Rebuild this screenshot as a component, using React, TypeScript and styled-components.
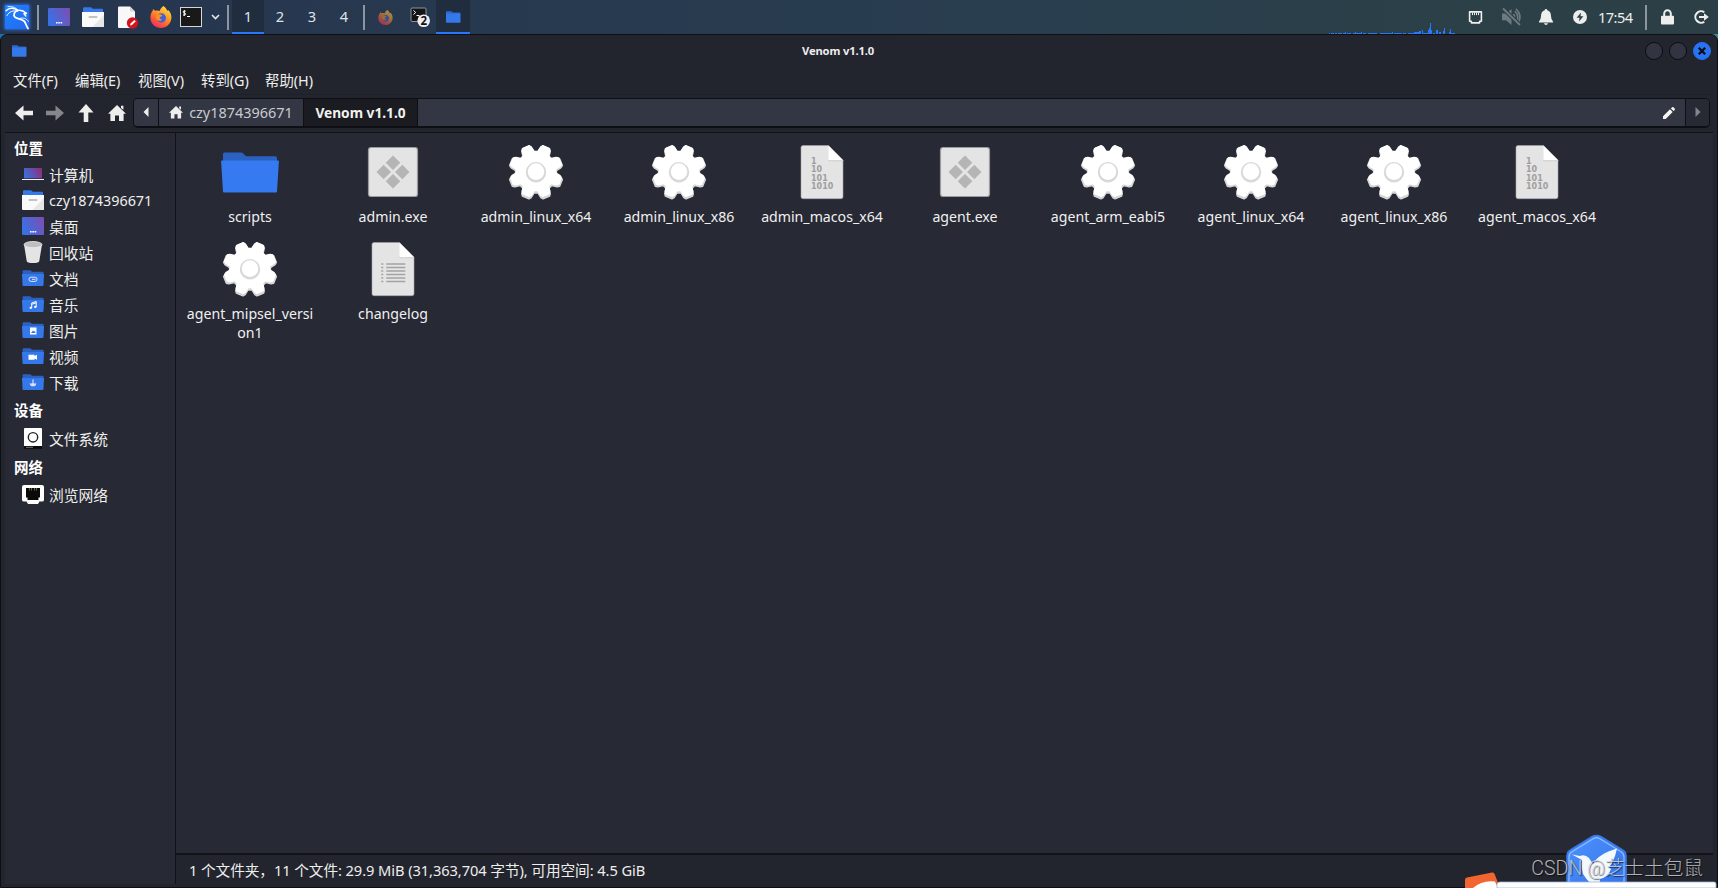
import React from "react";
import styled, { createGlobalStyle } from "styled-components";

const GlobalStyle = createGlobalStyle`
  * { box-sizing: border-box; }
  body { margin: 0; overflow: hidden; background: #101116; }
  svg { display: block; flex: none; overflow: visible; }
`;

const Desktop = styled.div`
  position: relative;
  width: 1718px;
  height: 888px;
  display: flex;
  flex-direction: column;
  overflow: hidden;
  color: #eeeeec;
  font-family: "Noto Sans", "Noto Sans CJK SC", sans-serif;
  font-size: 14px;
  background: linear-gradient(90deg, #1f6ea8 0%, #2a5f6c 50%, #3f8a8a 100%);
`;

/* ---------- top panel ---------- */

const Panel = styled.header`
  height: 34px;
  flex: none;
  display: flex;
  align-items: stretch;
  background: linear-gradient(90deg, #26354f 0%, #27394f 30%, #293e4f 60%, #2c4048 85%, #2c3f46 100%);
`;

const Slot = styled.div<{ $w: number }>`
  width: ${(p) => p.$w}px;
  flex: none;
  display: flex;
  align-items: center;
  justify-content: center;
`;

const Divider = styled.i`
  width: 2px;
  height: 25px;
  background: #8d959f;
`;

const Workspace = styled.div<{ $active?: boolean }>`
  width: 32px;
  height: 34px;
  padding-bottom: 2px;
  display: flex;
  align-items: center;
  justify-content: center;
  font-size: 14.67px;
  color: #dfe3e8;
  background: ${(p) => (p.$active ? "#202d3f" : "transparent")};
  box-shadow: ${(p) => (p.$active ? "inset 0 -2px 0 #2777ff" : "none")};
`;

const Task = styled(Slot)<{ $active?: boolean }>`
  background: ${(p) => (p.$active ? "#202d3f" : "transparent")};
  box-shadow: ${(p) => (p.$active ? "inset 0 -2px 0 #2777ff" : "none")};
`;

const Tray = styled.div`
  display: flex;
  margin-left: auto;
`;

const Clock = styled.time`
  width: 36px;
  display: flex;
  align-items: center;
  font-size: 14.6px;
  letter-spacing: -0.55px;
  padding-bottom: 1px;
`;

const CpuGraph = styled.svg`
  align-self: flex-end;
  margin-right: 3px;
`;

/* ---------- window ---------- */

const Window = styled.main`
  flex: 1;
  min-height: 0;
  display: flex;
  flex-direction: column;
  border: 1px solid #0e0f13;
  border-radius: 7px 7px 0 0;
  background: #23252e;
  padding: 0 4px 3px 4px;
`;

const TitleBar = styled.div`
  height: 31px;
  flex: none;
  display: grid;
  grid-template-columns: 90px 1fr 90px;
  align-items: center;
  padding: 0 2px 0 7px;
`;

const Title = styled.h1`
  margin: 0;
  font-size: 11.2px;
  letter-spacing: -0.15px;
  font-weight: 700;
  text-align: center;
  padding-right: 47px;
`;

const Controls = styled.div`
  display: flex;
  justify-content: flex-end;
  gap: 6px;
`;

const Control = styled.span<{ $close?: boolean }>`
  width: 18px;
  height: 18px;
  border-radius: 50%;
  display: flex;
  align-items: center;
  justify-content: center;
  border: 1px solid ${(p) => (p.$close ? "#2a72f0" : "#0c0d11")};
  background: ${(p) => (p.$close ? "#2673f5" : "#323541")};
`;

const MenuBar = styled.nav`
  height: 28px;
  flex: none;
  display: flex;
  align-items: center;
  gap: 16px;
  padding: 0 0 2px 8px;
  font-size: 14.4px;
`;

const MenuItem = styled.span<{ $w: number }>`
  width: ${(p) => p.$w}px;
  white-space: nowrap;
`;

const Toolbar = styled.div`
  height: 39px;
  flex: none;
  display: flex;
  align-items: center;
  padding: 0 3px 0 3px;
  border-bottom: 1px solid #111216;
  box-shadow: inset 0 1px 0 #1f2128;
`;

const PathBar = styled.div`
  flex: 1;
  height: 30px;
  display: flex;
  border: 1px solid #0e0f14;
  border-bottom-width: 2px;
  border-radius: 5px;
  background: #333643;
  overflow: hidden;
`;

const PathButton = styled.div<{ $w: number; $current?: boolean; $muted?: boolean }>`
  width: ${(p) => p.$w}px;
  flex: none;
  display: flex;
  align-items: center;
  justify-content: center;
  gap: 6px;
  border-right: 1px solid #0e0f14;
  white-space: nowrap;
  font-size: ${(p) => (p.$current ? 13.7 : 14.45)}px;
  padding-bottom: 1px;
  font-weight: ${(p) => (p.$current ? 700 : 400)};
  color: ${(p) => (p.$current ? "#f2f2f0" : "#c9cbd0")};
  background: ${(p) => (p.$current ? "#1b1c22" : p.$muted ? "#272934" : "#333643")};
  &:last-child { border-right: 0; }
`;

const PathField = styled.div`
  flex: 1;
  display: flex;
  align-items: center;
  justify-content: flex-end;
  padding-right: 10px;
  border-right: 1px solid #0e0f14;
`;

const Body = styled.div`
  flex: 1;
  min-height: 0;
  display: flex;
`;

const Sidebar = styled.aside`
  width: 171px;
  flex: none;
  background: #272934;
  border-right: 1px solid #111216;
`;

const Heading = styled.h2<{ $h?: number }>`
  margin: 0;
  height: ${(p) => p.$h ?? 28}px;
  padding-left: 9px;
  display: flex;
  align-items: center;
  font-size: 14.5px;
  font-weight: 700;
  color: #fff;
`;

const Place = styled.div<{ $h?: number }>`
  height: ${(p) => p.$h ?? 26}px;
  display: flex;
  align-items: center;
  gap: 5px;
  padding-left: 17px;
`;

const PlaceName = styled.span<{ $latin?: boolean }>`
  font-size: ${(p) => (p.$latin ? 14.4 : 14.75)}px;
`;

const Main = styled.section`
  flex: 1;
  display: flex;
  flex-direction: column;
  background: #272934;
`;

const Files = styled.div`
  flex: 1;
  display: grid;
  grid-template-columns: repeat(10, 143px);
  grid-auto-rows: 97px;
  padding: 10px 0 0 2.5px;
`;

const File = styled.figure`
  margin: 0;
  display: flex;
  flex-direction: column;
  align-items: center;
`;

const FileName = styled.figcaption`
  width: 132px;
  margin-top: 6px;
  line-height: 19px;
  font-size: 14.15px;
  text-align: center;
  word-break: break-all;
  color: #f0f0f0;
`;

const StatusBar = styled.footer`
  height: 31px;
  flex: none;
  display: flex;
  align-items: center;
  padding-left: 13px;
  font-size: 14.67px;
  white-space: pre;
  background: #23252e;
  border-top: 2px solid #131418;
`;

const StatusText = styled.span`
  letter-spacing: -0.08px;
`;

/* ---------- overlays ---------- */

const Popup = styled.div`
  position: absolute;
  left: 1462px;
  bottom: 0;
`;

const Watermark = styled.div`
  position: absolute;
  right: 15px;
  bottom: 6px;
  font-family: Roboto, "Noto Sans CJK SC", sans-serif;
  font-weight: 300;
  font-size: 19.6px;
  line-height: 26px;
  white-space: nowrap;
  color: rgba(214, 214, 216, 0.82);
  text-shadow: 1px 1px 1px rgba(0, 0, 0, 0.6);
`;

/* ---------- icons ---------- */

const KaliLogo = () => (
  <svg width="26" height="26" viewBox="0 0 26 26">
    <defs>
      <filter id="glow" x="-30%" y="-30%" width="160%" height="160%">
        <feGaussianBlur stdDeviation="1.8" />
      </filter>
      <linearGradient id="kali" x1="0" y1="0" x2="1" y2="1">
        <stop offset="0" stopColor="#1d84ff" />
        <stop offset="1" stopColor="#2567ef" />
      </linearGradient>
    </defs>
    <rect x="0" y="0" width="26" height="26" rx="2" fill="#2b7cff" opacity=".75" filter="url(#glow)" />
    <rect x="1" y="1" width="24" height="24" rx="1" fill="url(#kali)" />
    <g fill="none" stroke="#fff" strokeLinecap="round" strokeLinejoin="round">
      <path d="M2 6.800C5 3.600 9.500 3.600 14 6.300" strokeWidth="1.500" />
      <path d="M3 11.500C5 7.500 9 6.300 13.500 7" strokeWidth="1" />
      <path d="M4 2.600C8 2.200 11.500 3.600 13.500 5.600" strokeWidth=".9" />
      <path d="M13.500 6.500C10 8 9 11 11 13.200C13 15.300 18 14.300 20.400 17.400C22 19.600 22.200 22 24 24.500" strokeWidth="1.800" />
      <path d="M13.500 6.600C16.500 5.600 19.200 6.600 22.400 9.400L20 9.800L21.800 12" strokeWidth="1.500" />
      <path d="M15.500 14.500C19.500 13.200 22.500 14.400 24.400 17.400" strokeWidth=".9" />
    </g>
  </svg>
);

const DesktopIcon = ({ id }: { id: string }) => (
  <svg width="22" height="18" viewBox="0 0 22 18">
    <defs>
      <linearGradient id={id} x1="0" y1=".6" x2="1" y2=".2">
        <stop offset="0" stopColor="#3871e6" />
        <stop offset="1" stopColor="#7a4fb4" />
      </linearGradient>
    </defs>
    <rect width="22" height="18" rx="1" fill={`url(#${id})`} />
    <path d="M8 14h1.600v1.400H8zM10.300 14h1.600v1.400h-1.600zM12.600 14h1.600v1.400h-1.600z" fill="#fff" />
  </svg>
);

const HomeFolder = () => (
  <svg width="22" height="20" viewBox="0 0 22 20">
    <path d="M1 1.200Q1 .2 2 .2h7l1.800 1.600H20q1 0 1 1V8H1z" fill="#3578ea" />
    <path d="M0 5h22v14q0 1-1 1H1q-1 0-1-1z" fill="#fafafa" />
    <path d="M22 8v11q0 1-1 1H10.500z" fill="#e6e6e6" />
    <rect x="6.500" y="9" width="9" height="2" rx="1" fill="#c3c3c3" />
  </svg>
);

const EditorIcon = () => (
  <svg width="20" height="23" viewBox="0 0 20 23">
    <path d="M0 1.500Q0 .5 1 .5h11l5 5V21q0 1-1 1H1q-1 0-1-1z" fill="#f8f8f8" />
    <path d="M12 .5l5 5h-4q-1 0-1-1z" fill="#d4d4d4" />
    <circle cx="14.500" cy="17" r="5.700" fill="#d4141c" />
    <path d="M12 19.500l.6-2 3.800-3.600 1.400 1.300-3.800 3.700z" fill="#fff" />
  </svg>
);

const Firefox = ({ id, size, dim }: { id: string; size: number; dim?: boolean }) => (
  <svg width={size} height={size} viewBox="0 0 22 22" opacity={dim ? 0.58 : 1}>
    <defs>
      <linearGradient id={id} x1=".8" y1="0" x2=".2" y2="1">
        <stop offset="0" stopColor="#ffe14a" />
        <stop offset=".4" stopColor="#ff9a26" />
        <stop offset=".75" stopColor="#ff4f3c" />
        <stop offset="1" stopColor="#e8296c" />
      </linearGradient>
    </defs>
    <path
      d="M13.500 0C16 1.500 16.400 3.400 17.500 4.700L18.600 4.200C20.800 7 21.700 9.300 21.400 12.300C20.800 18 16.400 22 11 22C5 22 .4 17.500 .4 11.800C.4 9 1.200 6.600 2.800 4.600L3 2.900L5.200 4.800C7 4.200 8.300 4.300 9.600 5C10.400 3 11.600 1 13.500 0z"
      fill={`url(#${id})`}
    />
    <circle cx="11.300" cy="12" r="4.700" fill="#3f62d8" />
    <path d="M6.300 12.500C5.500 9.700 7.600 7.700 10.400 8.300L12.600 9.800L9.800 11.200C9.400 12.600 10.600 13.600 12.200 13.400C10.800 15.500 7.300 15.300 6.300 12.500z" fill="#ff9123" />
  </svg>
);

const Terminal = () => (
  <svg width="22" height="20" viewBox="0 0 22 20">
    <rect x=".5" y=".5" width="21" height="19" fill="#191919" stroke="#d6d6d6" />
    <path d="M5.600 4.200H4q-1 .2-.8 1t1.200.8q1.200.1 1.200 1T4.500 8H3M4.300 3v6M7 9.500h3" fill="none" stroke="#fff" strokeWidth="1" />
  </svg>
);

const TerminalTask = () => (
  <svg width="20" height="20" viewBox="0 0 20 20">
    <rect x="2" y="1" width="15" height="13.500" rx="1" fill="#141517" stroke="#8f9499" />
    <path d="M4.500 3.500l2.200 2-2.200 2M7.500 8.500h3" fill="none" stroke="#fff" />
    <circle cx="14.700" cy="13.700" r="6.300" fill="#efefef" />
    <text x="14.700" y="17.800" textAnchor="middle" fontSize="11.500" fontWeight="700" fill="#111" fontFamily="Noto Sans, sans-serif">2</text>
  </svg>
);

const MiniFolder = () => (
  <svg width="15" height="12" viewBox="0 0 15 12">
    <path d="M0 1Q0 .5.500.5h5l1.200 1.200h7Q14.500 1.700 14.500 2.500V11q0 .7-.7.7H.7Q0 11.700 0 11z" fill="#3578ea" />
    <path d="M0 1Q0 .5.500.5h5l1.200 1.200h7Q14.400 1.700 14.400 2.500H0z" fill="#2c66cc" />
  </svg>
);

const Chevron = () => (
  <svg width="9" height="6" viewBox="0 0 9 6">
    <path d="M1 1l3.500 3.500L8 1" fill="none" stroke="#e8e8e8" strokeWidth="1.600" />
  </svg>
);

const EthernetTray = () => (
  <svg width="15" height="13" viewBox="0 0 15 13">
    <path d="M1.600.9h11.800v9.400H11.600v1.600H3.400v-1.600H1.600z" fill="none" stroke="#eeeeec" strokeWidth="1.600" strokeLinejoin="round" />
    <path d="M4.500 1.500v2.600M6.500 1.500v2.600M8.500 1.500v2.600M10.500 1.500v2.600" stroke="#eeeeec" />
  </svg>
);

const MutedTray = () => (
  <svg width="19" height="18" viewBox="0 0 19 18" opacity=".95">
    <g fill="none" stroke="#737e84">
      <path d="M0 5.500h4L9.500 1v16L4 12.300H0z" fill="#737e84" stroke="none" />
      <path d="M11.500 6q2 3 0 6M13 3q5 5.500 1 12M14 .8q6 6 3 13" strokeWidth="1.600" />
      <path d="M1 .5L18 17" stroke="#2c4048" strokeWidth="4" />
      <path d="M1 .5L18 17" strokeWidth="1.800" />
    </g>
  </svg>
);

const BellTray = () => (
  <svg width="14" height="16" viewBox="0 0 14 16">
    <path d="M7 0q1.200 0 1.300 1.200Q12 2.200 12 7q0 3.500 2 5.400V13.500H0v-1.100Q2 10.500 2 7 2 2.200 5.700 1.200 5.800 0 7 0zM5 14.300h4Q8.600 16 7 16T5 14.300z" fill="#eeeeec" />
  </svg>
);

const PowerTray = () => (
  <svg width="14" height="14" viewBox="0 0 14 14">
    <circle cx="7" cy="7" r="7" fill="#eeeeec" />
    <path d="M8 2.400L3.600 7.700H6.500L6 11.600l4.400-5.300H7.500z" fill="#2c4048" />
  </svg>
);

const LockTray = () => (
  <svg width="13" height="16" viewBox="0 0 13 16">
    <path d="M3.200 8V4.500a3.300 3.300 0 0 1 6.600 0V8" fill="none" stroke="#eeeeec" strokeWidth="2" />
    <rect y="6.800" width="13" height="8.700" rx="1" fill="#eeeeec" />
  </svg>
);

const LogoutTray = () => (
  <svg width="15" height="14" viewBox="0 0 15 14">
    <path d="M10.300 2.300A5.700 5.700 0 1 0 10.300 11.700" fill="none" stroke="#eeeeec" strokeWidth="2" />
    <path d="M5 6h5V3.300L14.800 7 10 10.700V8H5z" fill="#eeeeec" />
  </svg>
);

const graphBars: [number, number, number][] = [
  [0, 1, 1], [2, 3, 1], [6, 2, 1], [9, 4, 1], [14, 2, 1], [16, 1, 2], [18, 4, 1], [24, 8, 1], [26, 1, 2],
  [32, 1, 2], [34, 3, 1], [39, 9, 1], [51, 12, 1], [63, 1, 2], [65, 8, 1], [74, 3, 1], [79, 6, 1], [85, 4, 2],
  [89, 3, 2], [90, 2, 3], [93, 1, 4], [94, 5, 1], [99, 2, 4], [100, 2, 6], [101, 1, 11], [102, 1, 4], [104, 2, 1],
  [107, 2, 4], [110, 2, 2], [114, 2, 3], [115, 1, 6], [120, 2, 2], [121, 1, 5], [122, 4, 1],
];

const BackArrow = ({ flip, muted }: { flip?: boolean; muted?: boolean }) => (
  <svg width="18" height="16" viewBox="0 0 18 16">
    <path
      transform={flip ? "translate(18 0) scale(-1 1)" : undefined}
      d="M0 8L8.500.5V5.700H18v4.600H8.500v5.200z"
      fill={muted ? "#86878b" : "#eeeeec"}
    />
  </svg>
);

const UpArrow = () => (
  <svg width="16" height="18" viewBox="0 0 16 18">
    <path d="M8 0L15.500 8.500H10.300V18H5.700V8.500H.5z" fill="#eeeeec" />
  </svg>
);

const HomeGlyph = ({ w }: { w: number }) => (
  <svg width={w} height={(w * 16) / 18} viewBox="0 0 18 16">
    <path d="M9 0L18 8.700H15.600V16H11V10.500H7V16H2.400V8.700H0zM13 .8h2.400v4L13 3z" fill="#eeeeec" />
  </svg>
);

const Triangle = ({ right }: { right?: boolean }) => (
  <svg width="6" height="10" viewBox="0 0 6 10">
    <path d={right ? "M.5 0L5.500 5L.5 10z" : "M5.500 0L.5 5L5.500 10z"} fill={right ? "#85868c" : "#eeeeec"} />
  </svg>
);

const Pencil = () => (
  <svg width="12" height="12" viewBox="0 0 12 12">
    <path d="M0 9.300L7 2.300 9.700 5 2.700 12H0zM7.900 1.400L9.100.3q.7-.6 1.300 0l1.300 1.300q.6.7 0 1.300L10.600 4.100z" fill="#f4f4f2" />
  </svg>
);

const LaptopIcon = () => (
  <svg width="22" height="12" viewBox="0 0 22 12">
    <defs>
      <linearGradient id="laptop" x1="0" y1=".6" x2="1" y2=".3">
        <stop offset="0" stopColor="#3a6fdc" />
        <stop offset="1" stopColor="#8c2f7c" />
      </linearGradient>
    </defs>
    <rect x="2" width="18" height="10.300" fill="url(#laptop)" />
    <rect y="11" width="22" height="1" fill="#f2f2f2" />
  </svg>
);

const TrashIcon = () => (
  <svg width="22" height="22" viewBox="0 0 22 22">
    <path d="M2 3.500L4.700 20Q5 22 11 22t6.300-2L20 3.500z" fill="#e4e4e4" />
    <ellipse cx="11" cy="3.600" rx="9" ry="3.100" fill="#bfbfbf" stroke="#ededed" strokeWidth=".8" />
  </svg>
);

const glyphs: Record<string, React.ReactNode> = {
  docs: (
    <g fill="none" stroke="#dbe7ff" strokeWidth="1">
      <rect x="7" y="7.200" width="8" height="4.200" rx="2.100" />
      <path d="M13.500 9.300h-3.500" />
    </g>
  ),
  music: <path d="M9.700 11.800V7l4.500-1.500v5.300M9.700 8.300l4.500-1.500" fill="none" stroke="#fff" strokeWidth="1" />,
  pics: <><rect x="8" y="5.500" width="6.500" height="7" fill="#fff" /><path d="M9 11l2-2.500 1 1 .7-.5 1 2z" fill="#3578ea" /></>,
  video: <path d="M6.500 6.800h6v1.300l2.500-1.300v5l-2.500-1.300v1.300h-6z" fill="#fff" />,
  down: <path d="M11 5.500v5.500M8.200 9.300q.5 2.500 2.800 2.500t2.800-2.500M9.500 9.500L11 11l1.500-1.500" fill="none" stroke="#dbe7ff" strokeWidth="1.100" />,
};

const PlaceFolder = ({ kind }: { kind: string }) => (
  <svg width="22" height="16" viewBox="0 0 22 16">
    <path d="M.6 1Q.6.2 1.500.2h6.800l1.700 1.500h10.600q1 0 1 1V8H.6z" fill="#2b62c2" />
    <path d="M0 4h22l-.5 11q0 1-1 1h-19q-1 0-1-1z" fill="#3478ea" />
    {kind === "music" && <path d="M7.500 11.800a1.300 1.100 0 1 0 2.600 0a1.300 1.100 0 1 0-2.600 0M12 10.900a1.300 1.100 0 1 0 2.600 0a1.300 1.100 0 1 0-2.600 0" fill="#fff" />}
    {glyphs[kind]}
  </svg>
);

const DiskIcon = () => (
  <svg width="22" height="21" viewBox="0 0 22 21">
    <path d="M3 0h16q1 0 1 1v17H2V1q0-1 1-1z" fill="#fff" />
    <rect x="2" y="18" width="18" height="2.800" fill="#0b0b0b" />
    <rect x="4" y="18.800" width="7" height="1" fill="#777" />
    <circle cx="11" cy="9.300" r="4.700" fill="none" stroke="#222" strokeWidth="1.400" />
  </svg>
);

const NetworkIcon = () => (
  <svg width="22" height="19" viewBox="0 0 22 19">
    <path d="M2 0h18q2 0 2 2v13q0 1.500-2 1.500h-2.500L16 19H6l-1.500-2.500H2Q0 16.500 0 15V2Q0 0 2 0z" fill="#fff" />
    <path d="M4 3h14v9.500h-1.500V15H5.500v-2.500H4z" fill="#0a0a0a" />
    <path d="M7.500 3v2.500M9.500 3v2.500M12.500 3v2.500M14.500 3v2.500" stroke="#6d6238" />
  </svg>
);

const FolderIcon = () => (
  <svg width="58" height="58" viewBox="0 0 58 58">
    <path d="M2 11Q2 9.500 3.500 9.500H20q1.500 0 2.500 1.200L25 13.200H54.500Q56 13.200 56 14.800V24H2z" fill="#2b62c2" />
    <path d="M.6 17.500h56.800q.6 0 .5.700L56 48.500q0 1-1.200 1H3.200q-1.200 0-1.200-1L.1 18.200q0-.7.5-.7z" fill="#357af0" />
  </svg>
);

const ExeIcon = () => (
  <svg width="58" height="58" viewBox="0 0 58 58">
    <rect x="4.500" y="4.500" width="49" height="49" rx="2.500" fill="#e4e4e4" stroke="#9c9ca0" strokeWidth="1.200" />
    <path d="M29 12.500l7.300 7.200-7.300 7.200-7.300-7.200zM29 31l7.300 7.200-7.300 7.200-7.300-7.200zM19.700 21.800l7.300 7.200-7.300 7.200-7.200-7.200zM38.300 21.800l7.200 7.200-7.200 7.200-7.300-7.200z" fill="#b5b5b5" />
  </svg>
);

// An eight-toothed cog: each tooth is a 45° wedge with a flat, rounded top.
const gearPoint = (deg: number, r: number) => {
  const a = (deg * Math.PI) / 180;
  return `${(29 + r * Math.cos(a)).toFixed(2)} ${(29 + r * Math.sin(a)).toFixed(2)}`;
};
const gearPath =
  Array.from({ length: 8 }, (_, i) => {
    const c = i * 45 + 22.5;
    return `${i ? "L" : "M"}${gearPoint(c - 17, 20.5)}L${gearPoint(c - 11.5, 25.5)}L${gearPoint(c - 7.5, 27.3)}L${gearPoint(c + 7.5, 27.3)}L${gearPoint(c + 11.5, 25.5)}L${gearPoint(c + 17, 20.5)}`;
  }).join("") + "z";

const GearIcon = () => (
  <svg width="58" height="58" viewBox="0 0 58 58">
    <g strokeLinejoin="round" strokeWidth="1.500">
      <path d={gearPath} transform="translate(0 .5)" fill="#d6d6d6" stroke="#d6d6d6" />
      <path d={gearPath} transform="translate(1.160 .2) scale(.96)" fill="#fff" stroke="#fff" />
    </g>
    <circle cx="29" cy="29.300" r="10.200" fill="#d8d8d8" />
    <circle cx="29" cy="28.600" r="8.300" fill="#fff" />
  </svg>
);

const Page = ({ children }: { children: React.ReactNode }) => (
  <svg width="58" height="58" viewBox="0 0 58 58">
    <path d="M8 4.500Q8 2.500 10 2.500H35.300L50 17.300V53.700Q50 55.700 48 55.700H10Q8 55.700 8 53.700z" fill="#e4e4e4" stroke="#a5a5a8" strokeWidth=".6" />
    <path d="M35.300 17q0 1.200 1.200 1.200H50V17.300L35.300 2.500z" fill="#c9c9c9" />
    <path d="M35.300 2.500L50 17.300H36.500q-1.200 0-1.200-1.200z" fill="#fff" />
    {children}
  </svg>
);

const BinaryIcon = () => (
  <Page>
    <g fill="#9e9e9e" fontFamily="DejaVu Sans, sans-serif" fontWeight="700" fontSize="8">
      <text x="18" y="20.500">1</text>
      <text x="18" y="28.700">10</text>
      <text x="18" y="38.200">101</text>
      <text x="18" y="46.400">1010</text>
    </g>
  </Page>
);

const TextIcon = () => (
  <Page>
    {[24, 27.5, 31, 34.5, 38, 41.5].map((y) => (
      <path key={y} d={`M17.300 ${y}h2M22.300 ${y}h19`} stroke="#a2a2a2" strokeWidth="1.500" />
    ))}
  </Page>
);

const icons = { folder: FolderIcon, exe: ExeIcon, gear: GearIcon, binary: BinaryIcon, text: TextIcon };

const files: { name: string; icon: keyof typeof icons }[] = [
  { name: "scripts", icon: "folder" },
  { name: "admin.exe", icon: "exe" },
  { name: "admin_linux_x64", icon: "gear" },
  { name: "admin_linux_x86", icon: "gear" },
  { name: "admin_macos_x64", icon: "binary" },
  { name: "agent.exe", icon: "exe" },
  { name: "agent_arm_eabi5", icon: "gear" },
  { name: "agent_linux_x64", icon: "gear" },
  { name: "agent_linux_x86", icon: "gear" },
  { name: "agent_macos_x64", icon: "binary" },
  { name: "agent_mipsel_version1", icon: "gear" },
  { name: "changelog", icon: "text" },
];

const places: { name: string; icon: React.ReactNode }[] = [
  { name: "计算机", icon: <LaptopIcon /> },
  { name: "czy1874396671", icon: <HomeFolder /> },
  { name: "桌面", icon: <DesktopIcon id="side-desktop" /> },
  { name: "回收站", icon: <TrashIcon /> },
  { name: "文档", icon: <PlaceFolder kind="docs" /> },
  { name: "音乐", icon: <PlaceFolder kind="music" /> },
  { name: "图片", icon: <PlaceFolder kind="pics" /> },
  { name: "视频", icon: <PlaceFolder kind="video" /> },
  { name: "下载", icon: <PlaceFolder kind="down" /> },
];

const PopupArt = () => (
  <svg width="256" height="54" viewBox="0 0 256 54">
    <defs>
      <linearGradient id="hex" x1="0" y1="0" x2="1" y2="1">
        <stop offset="0" stopColor="#4b93ff" />
        <stop offset="1" stopColor="#3672e6" />
      </linearGradient>
    </defs>
    <path d="M105 54V22q0-4 3.500-6L130 2.800q4.500-2.500 9 0L160.500 16q3.500 2 3.500 6V54z" fill="url(#hex)" stroke="#3a78ea" strokeWidth="1.600" />
    <path d="M107 54V23q0-3.500 3-5.300L131.500 4.600q3-1.800 6 0L159 17.700q3 1.800 3 5.300V54" fill="none" stroke="#8fbcff" strokeWidth="1.200" />
    <path d="M110 20.500L118 22Q123 20 127 24L131 30Q136 20 155 14.500Q152 28 147 33L149 35Q146 43 138 45Q137 48 140 50H129Q124 45 121 40Q119 32 120 26z" fill="#f4f8ff" />
    <path d="M3 54V46q0-2 2-2.400L30 38.500q2-.5 2.600 1.500L38 54z" fill="#f26531" />
    <path d="M11 54Q20 46 33 47.500L36 54z" fill="#fff" />
    <path d="M35 54V50.500Q35 48 38 48H252q2 0 2 2V54z" fill="#fff" stroke="#9db4d8" strokeWidth=".8" />
  </svg>
);

export default function App() {
  return (
    <Desktop>
      <GlobalStyle />
      <Panel>
        <Slot $w={34}><KaliLogo /></Slot>
        <Slot $w={8}><Divider /></Slot>
        <Slot $w={34}><DesktopIcon id="panel-desktop" /></Slot>
        <Slot $w={34}><HomeFolder /></Slot>
        <Slot $w={36}><EditorIcon /></Slot>
        <Slot $w={30}><Firefox id="fox" size={22} /></Slot>
        <Slot $w={30}><Terminal /></Slot>
        <Slot $w={18}><Chevron /></Slot>
        <Slot $w={8}><Divider /></Slot>
        <Workspace $active>1</Workspace>
        <Workspace>2</Workspace>
        <Workspace>3</Workspace>
        <Workspace>4</Workspace>
        <Slot $w={8}><Divider /></Slot>
        <Task $w={34}><Firefox id="fox-dim" size={15} dim /></Task>
        <Task $w={34}><TerminalTask /></Task>
        <Task $w={34} $active><MiniFolder /></Task>
        <Tray>
          <CpuGraph width="126" height="12" viewBox="0 0 126 12">
            {graphBars.map(([x, w, h], i) => (
              <rect key={i} x={x} y={12 - h} width={w} height={h} fill="#2777ff" />
            ))}
          </CpuGraph>
          <Slot $w={35}><EthernetTray /></Slot>
          <Slot $w={37}><MutedTray /></Slot>
          <Slot $w={32}><BellTray /></Slot>
          <Slot $w={36}><PowerTray /></Slot>
          <Clock>17:54</Clock>
          <Slot $w={24}><Divider /></Slot>
          <Slot $w={18}><LockTray /></Slot>
          <Slot $w={9} />
          <Slot $w={33}><LogoutTray /></Slot>
        </Tray>
      </Panel>

      <Window>
        <TitleBar>
          <MiniFolder />
          <Title>Venom v1.1.0</Title>
          <Controls>
            <Control />
            <Control />
            <Control $close>
              <svg width="8" height="8" viewBox="0 0 8 8">
                <path d="M.8.8l6.400 6.400M7.200.8L.8 7.200" stroke="#0d0e12" strokeWidth="2.300" />
              </svg>
            </Control>
          </Controls>
        </TitleBar>

        <MenuBar>
          <MenuItem $w={46}>文件(F)</MenuItem>
          <MenuItem $w={47}>编辑(E)</MenuItem>
          <MenuItem $w={47}>视图(V)</MenuItem>
          <MenuItem $w={48}>转到(G)</MenuItem>
          <MenuItem $w={50}>帮助(H)</MenuItem>
        </MenuBar>

        <Toolbar>
          <Slot $w={32}><BackArrow /></Slot>
          <Slot $w={30}><BackArrow flip muted /></Slot>
          <Slot $w={31}><UpArrow /></Slot>
          <Slot $w={32}><HomeGlyph w={18} /></Slot>
          <PathBar>
            <PathButton $w={25}><Triangle /></PathButton>
            <PathButton $w={145}><HomeGlyph w={14} />czy1874396671</PathButton>
            <PathButton $w={114} $current>Venom v1.1.0</PathButton>
            <PathField><Pencil /></PathField>
            <PathButton $w={23} $muted><Triangle right /></PathButton>
          </PathBar>
        </Toolbar>

        <Body>
          <Sidebar>
            <Heading>位置</Heading>
            {places.map((p) => (
              <Place key={p.name}>
                {p.icon}
                <PlaceName $latin={p.name.startsWith("czy")}>{p.name}</PlaceName>
              </Place>
            ))}
            <Heading $h={29}>设备</Heading>
            <Place $h={28}><DiskIcon /><PlaceName>文件系统</PlaceName></Place>
            <Heading>网络</Heading>
            <Place $h={28}><NetworkIcon /><PlaceName>浏览网络</PlaceName></Place>
          </Sidebar>
          <Main>
            <Files>
              {files.map((f) => {
                const Icon = icons[f.icon];
                return (
                  <File key={f.name}>
                    <Icon />
                    <FileName>{f.name}</FileName>
                  </File>
                );
              })}
            </Files>
            <StatusBar>
              <StatusText>1 个文件夹，11 个文件: 29.9 MiB (31,363,704 字节), 可用空间: 4.5 GiB</StatusText>
            </StatusBar>
          </Main>
        </Body>
      </Window>

      <Popup><PopupArt /></Popup>
      <Watermark>CSDN @芝士土包鼠</Watermark>
    </Desktop>
  );
}
